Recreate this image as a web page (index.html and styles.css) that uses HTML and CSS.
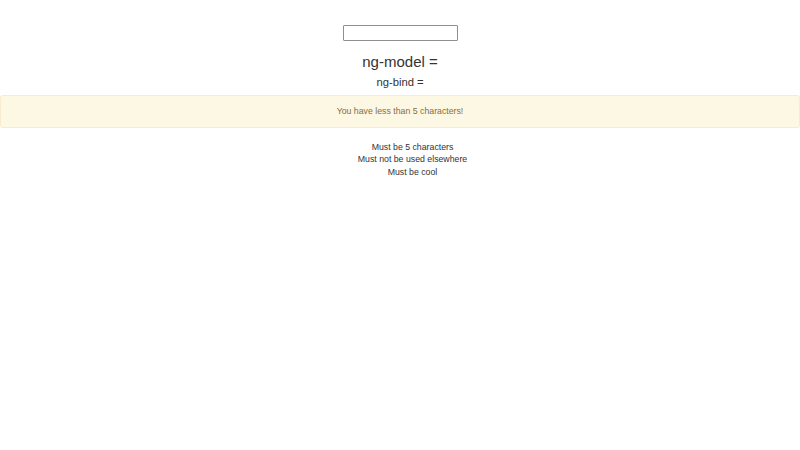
FILE: index.html
```html
<!DOCTYPE html>
<html>
<head>
<meta charset="utf-8">
<link rel="stylesheet" href="styles.css">
</head>
<body>
<div class="page">
  <div class="field"><input class="name-input" type="text"></div>
  <h3 class="model">ng-model = </h3>
  <h4 class="bind">ng-bind = </h4>
  <div class="alert">You have less than 5 characters!</div>
  <ul class="rules">
    <li>Must be 5 characters</li>
    <li>Must not be used elsewhere</li>
    <li>Must be cool</li>
  </ul>
</div>
</body>
</html>
```
FILE: styles.css
```css
html, body {
  margin: 0;
  padding: 0;
  background: #fff;
}
body {
  font-family: "Liberation Sans", Arial, sans-serif;
  font-size: 8.75px;
  line-height: 12.5px;
  color: #333;
}
.page {
  text-align: center;
}
.field {
  padding-top: 25px;
  height: 16px;
  display: flex;
  justify-content: center;
}
.name-input {
  box-sizing: border-box;
  width: 115px;
  height: 16px;
  margin: 0;
  padding: 1px 2px;
  border: 1px solid #8f8f8f;
  border-radius: 1px;
  background: #fff;
  font-family: inherit;
  font-size: 8.75px;
}
.model {
  margin: 12.5px 0 6.25px;
  font-size: 15px;
  line-height: 16.5px;
  font-weight: 500;
  color: #333;
}
.bind {
  margin: 6.25px 0 6.25px;
  font-size: 11.25px;
  line-height: 12.4px;
  font-weight: 500;
  color: #333;
}
.alert {
  padding: 9.4px;
  margin-bottom: 12.5px;
  border: 0.6px solid #faebcc;
  border-radius: 2.5px;
  background: #fcf8e3;
  color: #8a6d3b;
}
.rules {
  list-style: none;
  margin: 0;
  padding: 0 0 0 25px;
}
```
